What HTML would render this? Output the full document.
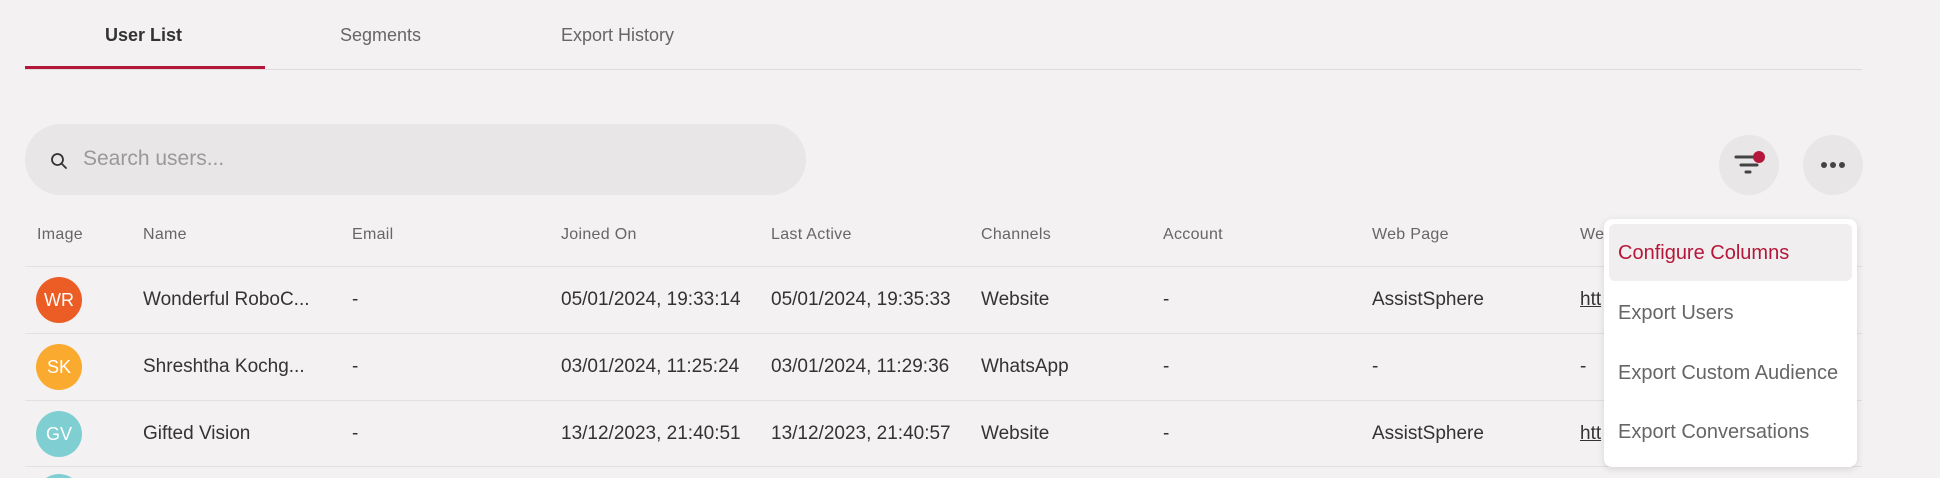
<!DOCTYPE html>
<html><head><meta charset="utf-8"><style>
*{margin:0;padding:0;box-sizing:border-box}
html,body{width:1940px;height:478px;overflow:hidden}
body{background:#f3f1f2;font-family:"Liberation Sans",sans-serif;color:#333;position:relative}
.a{position:absolute;white-space:nowrap}
.tab{font-size:18px;color:#666;top:25px}
.hd{font-size:16px;color:#666;top:226px;letter-spacing:0.3px}
.c{font-size:19px;color:#333}
.av{position:absolute;left:36px;width:46px;height:46px;border-radius:50%;color:#fff;font-size:18px;text-align:center;line-height:46px}
.ln{position:absolute;left:25px;width:1837px;height:1px;background:#e2e0e1}
.mi{position:absolute;left:1618px;font-size:20px;color:#666}
</style></head><body>
<div class="a tab" style="left:105px;color:#333;font-weight:bold">User List</div>
<div class="a tab" style="left:340px">Segments</div>
<div class="a tab" style="left:561px">Export History</div>
<div style="position:absolute;left:25px;top:69px;width:1837px;height:1px;background:#dddbdc"></div>
<div style="position:absolute;left:25px;top:66px;width:240px;height:3px;background:#b5173a"></div>

<div style="position:absolute;left:25px;top:124px;width:781px;height:71px;border-radius:36px;background:#e8e6e7"></div>
<svg class="a" style="left:50px;top:152px" width="18" height="18" viewBox="0 0 18 18"><circle cx="7.5" cy="7.5" r="5.5" fill="none" stroke="#333" stroke-width="1.8"/><line x1="11.5" y1="11.5" x2="16" y2="16" stroke="#333" stroke-width="1.8" stroke-linecap="round"/></svg>
<div class="a" style="left:83px;top:147px;font-size:21px;color:#999">Search users...</div>

<div style="position:absolute;left:1719px;top:135px;width:60px;height:60px;border-radius:50%;background:#e8e6e7"></div>
<svg class="a" style="left:1719px;top:135px" width="60" height="60"><g stroke="#444" stroke-width="3" stroke-linecap="round"><line x1="17" y1="22" x2="40" y2="22"/><line x1="22" y1="30" x2="38" y2="30"/><line x1="27" y1="37" x2="31" y2="37"/></g><circle cx="40" cy="22" r="6" fill="#b5173a"/></svg>
<div style="position:absolute;left:1803px;top:135px;width:60px;height:60px;border-radius:50%;background:#e8e6e7"></div>
<svg class="a" style="left:1803px;top:135px" width="60" height="60"><g fill="#444"><circle cx="21" cy="30" r="3"/><circle cx="30" cy="30" r="3"/><circle cx="39" cy="30" r="3"/></g></svg>

<div class="a hd" style="left:37px">Image</div>
<div class="a hd" style="left:143px">Name</div>
<div class="a hd" style="left:352px">Email</div>
<div class="a hd" style="left:561px">Joined On</div>
<div class="a hd" style="left:771px">Last Active</div>
<div class="a hd" style="left:981px">Channels</div>
<div class="a hd" style="left:1163px">Account</div>
<div class="a hd" style="left:1372px">Web Page</div>
<div class="a hd" style="left:1580px">We</div>

<div class="ln" style="top:266px"></div>
<div class="ln" style="top:333px"></div>
<div class="ln" style="top:400px"></div>
<div class="ln" style="top:466px"></div>

<div class="av" style="top:277px;background:#ec5d25">WR</div>
<div class="av" style="top:344px;background:#fbaa30">SK</div>
<div class="av" style="top:411px;background:#7fcfd2">GV</div>
<div style="position:absolute;left:36px;top:474px;width:46px;height:4px;overflow:hidden"><div style="width:46px;height:46px;border-radius:50%;background:#7fcfd2"></div></div>

<div class="a c" style="top:289px;left:143px">Wonderful RoboC...</div>
<div class="a c" style="top:289px;left:352px">-</div>
<div class="a c" style="top:289px;left:561px">05/01/2024, 19:33:14</div>
<div class="a c" style="top:289px;left:771px">05/01/2024, 19:35:33</div>
<div class="a c" style="top:289px;left:981px">Website</div>
<div class="a c" style="top:289px;left:1163px">-</div>
<div class="a c" style="top:289px;left:1372px">AssistSphere</div>
<div class="a c" style="top:289px;left:1580px;text-decoration:underline">htt</div>

<div class="a c" style="top:356px;left:143px">Shreshtha Kochg...</div>
<div class="a c" style="top:356px;left:352px">-</div>
<div class="a c" style="top:356px;left:561px">03/01/2024, 11:25:24</div>
<div class="a c" style="top:356px;left:771px">03/01/2024, 11:29:36</div>
<div class="a c" style="top:356px;left:981px">WhatsApp</div>
<div class="a c" style="top:356px;left:1163px">-</div>
<div class="a c" style="top:356px;left:1372px">-</div>
<div class="a c" style="top:356px;left:1580px">-</div>

<div class="a c" style="top:423px;left:143px">Gifted Vision</div>
<div class="a c" style="top:423px;left:352px">-</div>
<div class="a c" style="top:423px;left:561px">13/12/2023, 21:40:51</div>
<div class="a c" style="top:423px;left:771px">13/12/2023, 21:40:57</div>
<div class="a c" style="top:423px;left:981px">Website</div>
<div class="a c" style="top:423px;left:1163px">-</div>
<div class="a c" style="top:423px;left:1372px">AssistSphere</div>
<div class="a c" style="top:423px;left:1580px;text-decoration:underline">htt</div>

<div style="position:absolute;left:1604px;top:219px;width:253px;height:248px;background:#fff;border-radius:8px;box-shadow:0 2px 8px rgba(0,0,0,0.12)"></div>
<div style="position:absolute;left:1609px;top:224px;width:243px;height:57px;background:#f0eeef;border-radius:6px"></div>
<div class="mi" style="top:242px;color:#b5173a">Configure Columns</div>
<div class="mi" style="top:302px">Export Users</div>
<div class="mi" style="top:362px">Export Custom Audience</div>
<div class="mi" style="top:421px">Export Conversations</div>
</body></html>
